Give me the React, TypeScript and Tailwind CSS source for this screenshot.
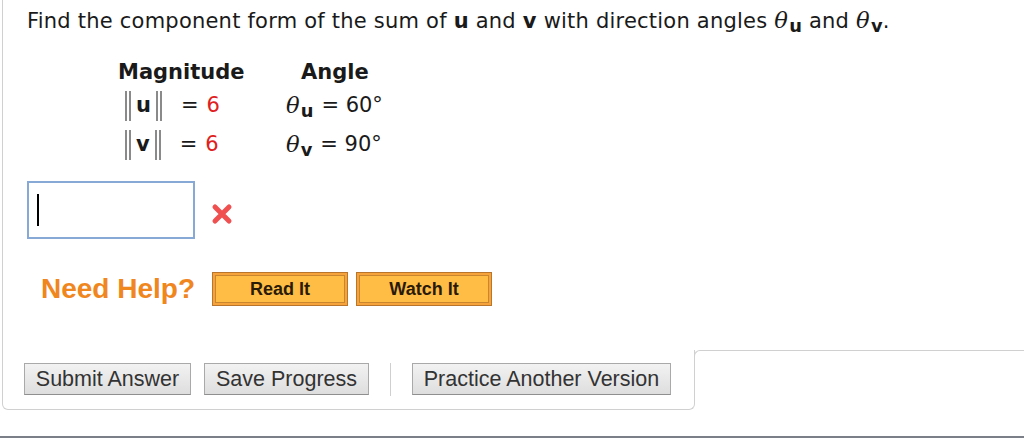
import React from 'react';

const verdana = { fontFamily: '"DejaVu Sans", Verdana, sans-serif' };
const arial = { fontFamily: '"Liberation Sans", Arial, sans-serif' };

function Theta({ sub }: { sub: string }) {
  return (
    <span className="whitespace-nowrap">
      <i className="text-[1.08em]" style={{ fontFamily: '"DejaVu Serif", "Liberation Serif", serif' }}>θ</i>
      <span className="relative top-[0.22em] text-[0.85em] font-bold ml-[1px]">{sub}</span>
    </span>
  );
}

function Bars() {
  return <span className="inline-block h-[30px] w-[6px] border-l-2 border-r-2 border-[#8a8a8a]" />;
}

function Norm({ v }: { v: string }) {
  return (
    <span className="inline-flex items-center">
      <Bars />
      <b className="mx-[5px]">{v}</b>
      <Bars />
    </span>
  );
}

function HelpButton({ label }: { label: string }) {
  return (
    <button className="w-[136px] h-[34px] border border-[#b8752b] bg-[#f7a33c] p-[2px]">
      <div className="h-full w-full border border-[#c9862e] bg-[#ffbd45] flex items-center justify-center text-[18px] font-bold text-[#2a1a08]" style={arial}>
        {label}
      </div>
    </button>
  );
}

function GrayButton({ label, w }: { label: string; w: string }) {
  return (
    <button
      className={`${w} h-[32px] border border-[#a9a9a9] border-b-[#8f8f8f] bg-gradient-to-b from-[#f2f2f2] to-[#dedede] text-[21.5px] text-[#333] flex items-center justify-center`}
      style={arial}
    >
      {label}
    </button>
  );
}

export default function App() {
  return (
    <div className="w-[1024px] h-[438px] bg-white overflow-hidden flex flex-col">
      <div className="h-[350px] ml-[2px] border-l border-[#d0d0d0] text-[#1a1a1a]" style={verdana}>
        <p className="pl-[24px] pt-[6px] text-[21px] leading-[28px] tracking-[0.22px] whitespace-nowrap">
          Find the component form of the sum of <b>u</b> and <b>v</b> with direction angles <Theta sub="u" /> and <Theta sub="v" />.
        </p>

        <div className="ml-[114px] mt-[22px] grid grid-cols-[166px_auto] text-[21px]">
          <div className="font-bold leading-[28px] pl-[1px]">Magnitude</div>
          <div className="font-bold leading-[28px] pl-[18px]">Angle</div>
          <div className="flex items-center h-[39px] pl-[8px]">
            <Norm v="u" />
            <span className="ml-[19px]">=</span>
            <span className="ml-[8px] text-[#e02020]">6</span>
          </div>
          <div className="flex items-center h-[39px] pl-[3px]">
            <Theta sub="u" />
            <span className="ml-[8px]">= 60°</span>
          </div>
          <div className="flex items-center h-[39px] pl-[8px]">
            <Norm v="v" />
            <span className="ml-[19px]">=</span>
            <span className="ml-[8px] text-[#e02020]">6</span>
          </div>
          <div className="flex items-center h-[39px] pl-[3px]">
            <Theta sub="v" />
            <span className="ml-[8px]">= 90°</span>
          </div>
        </div>

        <div className="ml-[24px] mt-[17px] flex items-center">
          <div className="w-[168px] h-[58px] border-2 border-[#86a9d6] flex items-center pl-[8px]">
            <div className="w-[2px] h-[32px] bg-black" />
          </div>
          <svg width="22" height="22" viewBox="0 0 22 22" className="ml-[16px] mt-[8px]">
            <path d="M4 4 L18 18 M18 4 L4 18" stroke="#f05050" strokeWidth="5" strokeLinecap="round" />
          </svg>
        </div>

        <div className="ml-[38px] mt-[29px] flex items-center">
          <span className="text-[28px] font-bold text-[#f0861e] mr-[17px]" style={arial}>
            Need Help?
          </span>
          <HelpButton label="Read It" />
          <div className="w-[8px]" />
          <HelpButton label="Watch It" />
        </div>
      </div>

      <div className="flex h-[60px]">
        <div className="w-[693px] ml-[2px] border-l border-b border-r border-[#d0d0d0] rounded-b-[6px] flex items-start pt-[13px] pl-[21px]">
          <GrayButton label="Submit Answer" w="w-[167px]" />
          <div className="w-[13px]" />
          <GrayButton label="Save Progress" w="w-[165px]" />
          <div className="w-[21px]" />
          <div className="w-px h-[33px] bg-[#cfcfcf]" />
          <div className="w-[21px]" />
          <GrayButton label="Practice Another Version" w="w-[259px]" />
        </div>
        <div className="flex-1 -ml-px border-t border-l border-[#d0d0d0] rounded-tl-[6px] h-[8px]" />
      </div>

      <div className="h-[26px]" />
      <div className="h-[2px] bg-[#7b8088]" />
    </div>
  );
}
